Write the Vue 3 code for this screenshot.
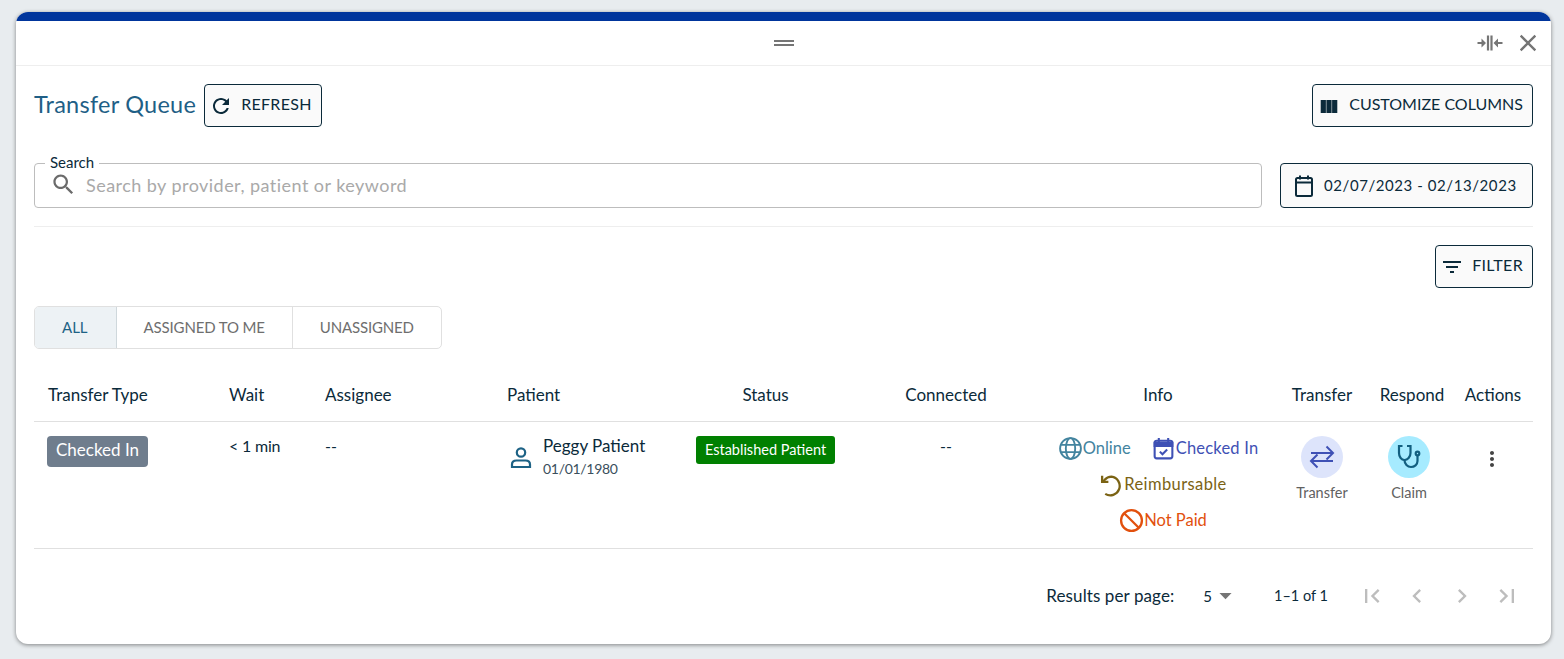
<template>
  <div class="page">
    <div class="card">
      <div class="topbar"></div>
      <div class="window-bar">
        <svg class="drag" width="24" height="24" viewBox="0 0 24 24"><path d="M2 9h20v2H2zM2 13h20v2H2z" /></svg>
        <div class="window-actions">
          <svg width="26" height="26" viewBox="0 0 26 26" fill="none" stroke="#757575">
            <path d="M11 5.500v15M14.500 5.500v15" stroke-width="2.200" />
            <path d="M0.5 13h5M20 13h5.500" stroke-width="2.200" />
            <path d="M9 13l-4.500-4.500v9zM16.500 13l4.500-4.500v9z" fill="#757575" stroke="none" />
          </svg>
          <svg width="28" height="28" viewBox="0 0 24 24" fill="#757575"><path d="M19 6.41L17.59 5 12 10.59 6.41 5 5 6.41 10.59 12 5 17.59 6.41 19 12 13.41 17.59 19 19 17.59 13.41 12z" /></svg>
        </div>
      </div>

      <div class="content">
        <div class="title-row">
          <h1 class="title">Transfer Queue</h1>
          <button class="btn refresh">
            <svg width="24" height="24" viewBox="0 0 24 24"><path d="M17.65 6.35C16.2 4.9 14.21 4 12 4c-4.42 0-7.99 3.58-7.99 8s3.57 8 7.99 8c3.73 0 6.84-2.55 7.73-6h-2.08c-.82 2.33-3.04 4-5.65 4-3.31 0-6-2.69-6-6s2.69-6 6-6c1.66 0 3.14.69 4.22 1.78L13 11h7V4l-2.35 2.35z" /></svg>
            REFRESH
          </button>
          <button class="btn push-right">
            <svg width="24" height="24" viewBox="0 0 24 24"><path d="M3.7 6h5.200v13H3.700zM9.400 6h5.200v13H9.400zM15.100 6h5.200v13h-5.200z" /></svg>
            CUSTOMIZE COLUMNS
          </button>
        </div>

        <div class="search-row">
          <div class="search-box">
            <span class="search-label">Search</span>
            <svg width="27" height="27" viewBox="0 0 24 24" fill="#6b6b6b"><path d="M15.5 14h-.79l-.28-.27C15.41 12.59 16 11.11 16 9.5 16 5.91 13.09 3 9.5 3S3 5.91 3 9.5 5.91 16 9.5 16c1.61 0 3.09-.59 4.23-1.57l.27.28v.79l5 4.99L20.49 19l-4.99-5zm-6 0C7.01 14 5 11.99 5 9.500S7.010 5 9.500 5 14 7.010 14 9.500 11.990 14 9.500 14z" /></svg>
            <span class="placeholder">Search by provider, patient or keyword</span>
          </div>
          <button class="btn date-btn">
            <svg class="outline" width="24" height="24" viewBox="0 0 24 24">
              <rect x="4" y="4" width="16" height="18" rx="1.500" />
              <path d="M4 8.500h16M8 1.500v4M16 1.500v4" />
            </svg>
            02/07/2023 - 02/13/2023
          </button>
        </div>

        <div class="divider"></div>

        <div class="filter-row">
          <button class="btn filter">
            <svg width="24" height="24" viewBox="0 0 24 24"><path d="M10 18h4v-2h-4v2zM3 6v2h18V6H3zm3 7h12v-2H6v2z" /></svg>
            FILTER
          </button>
        </div>

        <div class="tabs">
          <div v-for="tab in tabs" :key="tab" class="tab" :class="{ active: tab === 'ALL' }">{{ tab }}</div>
        </div>

        <table class="queue">
          <colgroup>
            <col v-for="w in colWidths" :key="w.id" :style="{ width: w.px + 'px' }" />
          </colgroup>
          <thead>
            <tr>
              <th>Transfer Type</th>
              <th>Wait</th>
              <th>Assignee</th>
              <th>Patient</th>
              <th class="center">Status</th>
              <th class="center">Connected</th>
              <th class="center">Info</th>
              <th class="center">Transfer</th>
              <th class="center">Respond</th>
              <th class="center">Actions</th>
            </tr>
          </thead>
          <tbody>
            <tr>
              <td><span class="chip-type">Checked In</span></td>
              <td class="plain wait">&lt; 1 min</td>
              <td class="plain">--</td>
              <td>
                <div class="patient">
                  <svg width="28" height="28" viewBox="0 0 28 28" fill="none" stroke="#1d6285" stroke-width="2.200">
                    <circle cx="14" cy="9.500" r="4.200" />
                    <path d="M5 24v-2.500c0-2.500 2-4 4.500-4h9c2.500 0 4.500 1.500 4.500 4V24z" />
                  </svg>
                  <div>
                    <div class="patient-name">Peggy Patient</div>
                    <div class="patient-dob">01/01/1980</div>
                  </div>
                </div>
              </td>
              <td class="center"><span class="chip-status">Established Patient</span></td>
              <td class="center plain">--</td>
              <td class="center">
                <div class="info">
                  <div class="info-line">
                    <span class="info-item online">
                      <svg width="25" height="25" viewBox="0 0 24 24" fill="none" stroke="#43849f" stroke-width="1.800">
                        <circle cx="12" cy="12" r="10" />
                        <ellipse cx="12" cy="12" rx="4.500" ry="10" />
                        <path d="M2.800 8.500h18.400M2.800 15.500h18.400" />
                      </svg>
                      <span class="info-text">Online</span>
                    </span>
                    <span class="info-item checked">
                      <svg width="25" height="25" viewBox="0 0 24 24" fill="none" stroke="#3f51b5" stroke-width="2">
                        <rect x="3.500" y="4.500" width="17" height="17" rx="2" />
                        <path d="M3.500 6.500h17v3h-17z" fill="#3f51b5" />
                        <path d="M7.500 2v4M16.500 2v4" />
                        <path d="M8.500 15l2.500 2.500 4.500-4.500" />
                      </svg>
                      <span class="info-text">Checked In</span>
                    </span>
                  </div>
                  <div class="info-line off-center">
                    <span class="info-item reimb">
                      <svg width="25" height="25" viewBox="0 0 24 24" fill="none" stroke="#7b6314" stroke-width="2.200">
                        <path d="M6 21a9 9 0 1 0 6-16.500c-3 0-5 1.200-7 3.500L3.500 9.500" />
                        <path d="M3 3.500v6h6" />
                      </svg>
                      <span class="info-text">Reimbursable</span>
                    </span>
                  </div>
                  <div class="info-line off-center">
                    <span class="info-item notpaid">
                      <svg width="25" height="25" viewBox="0 0 24 24" fill="none" stroke="#e2500d" stroke-width="2.200">
                        <circle cx="12" cy="12" r="10" />
                        <path d="M5 5l14 14" />
                      </svg>
                      <span class="info-text">Not Paid</span>
                    </span>
                  </div>
                </div>
              </td>
              <td class="center">
                <div class="respond">
                  <span class="round transfer">
                    <svg width="28" height="28" viewBox="0 0 28 28" fill="none" stroke="#3f51b5" stroke-width="2">
                      <path d="M3 10h22M18.500 3.500L25 10l-6.500 6.500" />
                      <path d="M25 18H3M9.500 11.500L3 18l6.500 6.500" />
                    </svg>
                  </span>
                  <span class="round-label">Transfer</span>
                </div>
              </td>
              <td class="center">
                <div class="respond claim-shift">
                  <span class="round claim">
                    <svg width="28" height="28" viewBox="0 0 28 28" fill="none" stroke="#125f80" stroke-width="2.200">
                      <path d="M7.500 3H4v7c0 4 2.500 7 5.500 7s6-3 6-7V3H12" />
                      <path d="M9.500 17c0 4 3 7 6.500 7s6.500-2.500 6.500-6v-5" />
                      <circle cx="22.500" cy="10.500" r="1.800" />
                    </svg>
                  </span>
                  <span class="round-label">Claim</span>
                </div>
              </td>
              <td class="center">
                <svg class="more" width="24" height="24" viewBox="0 0 24 24" fill="#444"><path d="M12 8c1.100 0 2-.9 2-2s-.9-2-2-2-2 .9-2 2 .9 2 2 2zm0 2c-1.100 0-2 .9-2 2s.9 2 2 2 2-.9 2-2-.9-2-2-2zm0 6c-1.100 0-2 .9-2 2s.9 2 2 2 2-.9 2-2-.9-2-2-2z" /></svg>
              </td>
            </tr>
          </tbody>
        </table>

        <div class="pager">
          <span class="per-page">Results per page:</span>
          <span class="per-value">5</span>
          <svg class="caret" width="29" height="29" viewBox="0 0 24 24" fill="#757575"><path d="M7 10l5 5 5-5z" /></svg>
          <span class="range">1–1 of 1</span>
          <div class="pager-nav">
            <svg v-for="p in pagerIcons" :key="p" width="28" height="28" viewBox="0 0 24 24" fill="#bdbdbd"><path :d="p" /></svg>
          </div>
        </div>
      </div>
    </div>
  </div>
</template>

<script setup>
const tabs = ['ALL', 'ASSIGNED TO ME', 'UNASSIGNED']

const colWidths = [181, 96, 182, 189, 167, 194, 230, 98, 82, 80].map((px, id) => ({ id, px }))

const pagerIcons = [
  'M18.41 16.59L13.82 12l4.59-4.59L17 6l-6 6 6 6zM6 6h2v12H6z',
  'M15.41 7.41L14 6l-6 6 6 6 1.41-1.41L10.83 12z',
  'M10 6L8.59 7.41 13.17 12l-4.58 4.59L10 18l6-6z',
  'M5.59 7.41L10.18 12l-4.59 4.59L7 18l6-6-6-6zM16 6h2v12h-2z'
]
</script>

<style scoped>
.page {
  height: 659px;
  box-sizing: border-box;
  padding: 12px 13px 15px 16px;
  background: #e8ecef;
  font-family: Lato, "Open Sans", sans-serif;
  color: #0b2a3a;
  overflow: hidden;
}

.card {
  height: 632px;
  background: #fff;
  border-radius: 12px;
  overflow: hidden;
  box-shadow: 0 1px 4px rgba(0, 0, 0, 0.45);
}

.topbar {
  height: 9px;
  background: #00359c;
}

.window-bar {
  height: 44px;
  border-bottom: 1px solid #eeeeee;
  display: flex;
  align-items: center;
  justify-content: center;
  position: relative;
}

.drag {
  fill: #757575;
}

.window-actions {
  position: absolute;
  right: 9px;
  top: 8px;
  display: flex;
  align-items: center;
  gap: 11px;
}

.content {
  padding: 18px 18px 0;
}

.title-row {
  display: flex;
  align-items: center;
  gap: 8px;
}

.title {
  margin: 0;
  padding-bottom: 3px;
  font-size: 23.5px;
  font-weight: 400;
  color: #1f5f86;
  letter-spacing: 0.25px;
}

.btn {
  height: 43px;
  box-sizing: border-box;
  padding: 0 9px 5px 4px;
  display: flex;
  align-items: center;
  gap: 8px;
  border: 1px solid #0b2a3a;
  border-radius: 4px;
  background: #fafafa;
  color: #0b2a3a;
  font-family: inherit;
  font-size: 16px;
  font-weight: 400;
}

.btn svg {
  fill: #0b2a3a;
  flex-shrink: 0;
  margin-top: 5px;
}

.btn svg.outline {
  fill: none;
  stroke: #0b2a3a;
  stroke-width: 2;
}

.refresh {
  letter-spacing: 0.3px;
}

.filter {
  letter-spacing: 0.3px;
}

.push-right {
  margin-left: auto;
}

.search-row {
  margin-top: 36px;
  display: flex;
  gap: 18px;
}

.search-box {
  flex: 1;
  height: 45px;
  box-sizing: border-box;
  border: 1px solid #bdbdbd;
  border-radius: 4px;
  padding: 0 0 2px 15px;
  display: flex;
  align-items: center;
  gap: 9px;
  position: relative;
}

.search-label {
  position: absolute;
  left: 10px;
  top: -11px;
  padding: 0 5px;
  background: #fff;
  font-size: 15px;
  line-height: 18px;
}

.placeholder {
  font-size: 18px;
  color: #a9a9a9;
  letter-spacing: 0.46px;
}

.date-btn {
  width: 253px;
  height: 45px;
  font-size: 15px;
  padding: 0 0 1px 11px;
  gap: 8px;
  letter-spacing: 0.57px;
}

.date-btn svg {
  margin-top: 1px;
}

.divider {
  margin-top: 18px;
  border-top: 1px solid #eeeeee;
}

.filter-row {
  margin-top: 18px;
  display: flex;
  justify-content: flex-end;
}

.tabs {
  margin-top: 18px;
  display: inline-flex;
  border: 1px solid #e0e0e0;
  border-radius: 5px;
  overflow: hidden;
  height: 43px;
  box-sizing: border-box;
}

.tab {
  padding: 0 27px 2px;
  display: flex;
  align-items: center;
  font-size: 15px;
  font-weight: 400;
  color: #6e6e6e;
  border-left: 1px solid #e0e0e0;
  letter-spacing: -0.15px;
}

.tab:first-child {
  border-left: 0;
}

.tab.active {
  padding-right: 28px;
  background: #edf2f5;
  color: #1d6285;
  border-right: 1px solid #cfd8dc;
  letter-spacing: 0;
}

.tab.active + .tab {
  border-left: 0;
}

.queue {
  width: 100%;
  margin-top: 24px;
  border-collapse: collapse;
  table-layout: fixed;
}

.queue th {
  height: 48px;
  box-sizing: border-box;
  padding: 0 14px 4px;
  text-align: left;
  font-size: 17px;
  font-weight: 400;
  border-bottom: 1px solid #e0e0e0;
  white-space: nowrap;
}

.queue th.center,
.queue td.center {
  text-align: center;
  padding-left: 0;
  padding-right: 0;
}

.queue td {
  height: 127px;
  box-sizing: border-box;
  padding: 14px 14px 0;
  vertical-align: top;
  font-size: 16px;
  border-bottom: 1px solid #e0e0e0;
}

.queue td.wait {
  letter-spacing: -0.2px;
}

.chip-type {
  display: inline-block;
  margin-left: -1px;
  padding: 0 9px 3px;
  line-height: 28px;
  font-size: 17px;
  background: #6f7d8d;
  color: #fff;
  border-radius: 4px;
  white-space: nowrap;
}

.patient {
  display: flex;
  align-items: center;
  gap: 8px;
}

.patient-name {
  font-size: 17px;
  line-height: 20px;
}

.patient-dob {
  margin-top: 4px;
  font-size: 14px;
  line-height: 18px;
  color: #3a4f5c;
  letter-spacing: -0.3px;
}

.chip-status {
  display: inline-block;
  padding: 0 9px 1px;
  line-height: 27px;
  background: #008000;
  color: #fff;
  border-radius: 3px;
  font-size: 14.5px;
  white-space: nowrap;
}

.info {
  display: flex;
  flex-direction: column;
  align-items: center;
  gap: 11px;
}

.info-line {
  display: flex;
  justify-content: center;
  gap: 20px;
  height: 25px;
}

.off-center {
  margin-left: 10px;
}

.info-item {
  display: flex;
  align-items: center;
  white-space: nowrap;
  font-size: 16.5px;
}

.info-text {
  margin-top: 0;
}

.online { color: #43849f; }
.checked { color: #3f51b5; letter-spacing: 0.2px; }
.reimb { color: #7b6314; letter-spacing: 0.4px; }
.notpaid { color: #e2500d; }

.respond {
  display: flex;
  flex-direction: column;
  align-items: center;
}

.claim-shift {
  margin-right: 6px;
}

.round {
  width: 42px;
  height: 42px;
  border-radius: 50%;
  display: flex;
  align-items: center;
  justify-content: center;
}

.transfer { background: #dde4fb; }
.claim { background: #a6ebff; }

.round-label {
  margin-top: 6px;
  font-size: 14.5px;
  color: #616161;
}

.more {
  margin: 11px 2px 0 0;
}

.pager {
  height: 94px;
  display: flex;
  align-items: center;
  font-size: 17px;
  padding-right: 12px;
  box-sizing: border-box;
}

.per-page {
  margin-left: auto;
  letter-spacing: 0.1px;
}

.per-value {
  margin-left: 29px;
  font-size: 15px;
}

.caret {
  margin-left: -1px;
}

.range {
  margin-left: 34px;
  font-size: 14.5px;
}

.pager-nav {
  margin-left: 30px;
  display: flex;
  gap: 17px;
}
</style>
